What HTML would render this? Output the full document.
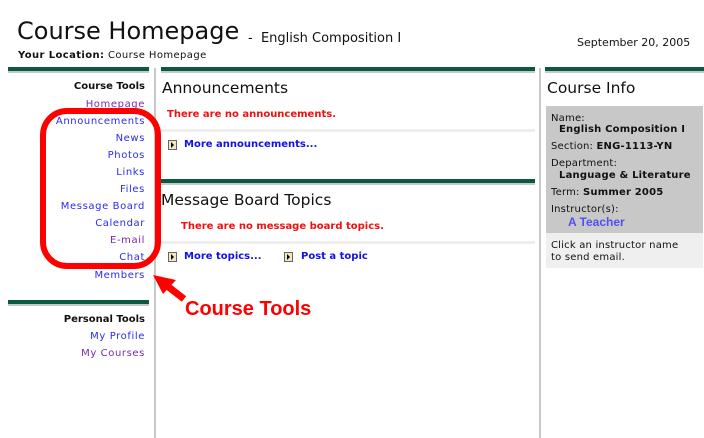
<!DOCTYPE html>
<html><head><style>
body{margin:0;width:704px;height:438px;background:#fff;position:relative;overflow:hidden;font-family:"DejaVu Sans",Verdana,sans-serif;}
.a{position:absolute;white-space:nowrap;}
.bar{position:absolute;height:4px;background:#0b5a3f;border-bottom:2px solid #c8c8c8;}
.vl{position:absolute;width:2px;background:#c8c8c8;top:68px;height:370px;}
.nav{position:absolute;right:559px;font-size:10px;color:#2a2af0;letter-spacing:0.6px;}
.v{color:#7a2aa8;}
.red{color:#f01010;font-weight:bold;font-size:10px;}
.lnk{color:#1010e8;font-weight:bold;font-size:10px;}
.ic{position:absolute;width:7px;height:8px;border:1px solid #666;background:#eee8c0;}
.ic:after{content:"";position:absolute;left:2px;top:1px;border-left:3px solid #000;border-top:3px solid transparent;border-bottom:3px solid transparent;}
.sep{position:absolute;left:161px;width:374px;height:3px;background:#eee;}
.ci{font-size:10px;color:#111;letter-spacing:0.2px;}
</style></head><body>
<div class="a" style="left:17px;top:17px;font-size:24px;color:#111;">Course Homepage</div>
<div class="a" style="left:248px;top:31px;font-size:13px;color:#111;">- &nbsp;English Composition I</div>
<div class="a" style="left:18px;top:50px;font-size:10px;color:#111;letter-spacing:0.4px;"><b>Your Location:</b> Course Homepage</div>
<div class="a" style="left:577px;top:36px;font-size:11px;color:#111;">September 20, 2005</div>

<div class="bar" style="left:8px;width:141px;top:67px;"></div>
<div class="bar" style="left:161px;width:374px;top:67px;"></div>
<div class="bar" style="left:545px;width:159px;top:67px;"></div>
<div class="vl" style="left:154px;"></div>
<div class="vl" style="left:539px;"></div>

<div class="nav" style="top:81px;color:#111;font-weight:bold;letter-spacing:0;">Course Tools</div>
<div class="nav v" style="top:99px;">Homepage</div>
<div class="nav" style="top:116px;">Announcements</div>
<div class="nav" style="top:133px;">News</div>
<div class="nav" style="top:150px;">Photos</div>
<div class="nav" style="top:167px;">Links</div>
<div class="nav" style="top:184px;">Files</div>
<div class="nav" style="top:201px;">Message Board</div>
<div class="nav" style="top:218px;">Calendar</div>
<div class="nav v" style="top:235px;">E-mail</div>
<div class="nav" style="top:252px;">Chat</div>
<div class="nav" style="top:270px;">Members</div>

<div class="bar" style="left:8px;width:141px;top:300px;"></div>
<div class="nav" style="top:314px;color:#111;font-weight:bold;letter-spacing:0;">Personal Tools</div>
<div class="nav" style="top:331px;">My Profile</div>
<div class="nav v" style="top:348px;">My Courses</div>

<div class="a" style="left:162px;top:79px;font-size:15.5px;color:#111;">Announcements</div>
<div class="a red" style="left:167px;top:109px;">There are no announcements.</div>
<div class="sep" style="top:129px;"></div>
<div class="ic" style="left:168px;top:140px;"></div>
<div class="a lnk" style="left:184px;top:139px;">More announcements...</div>

<div class="bar" style="left:161px;width:374px;top:179px;"></div>
<div class="a" style="left:161px;top:191px;font-size:15.5px;color:#111;">Message Board Topics</div>
<div class="a red" style="left:181px;top:221px;">There are no message board topics.</div>
<div class="sep" style="top:241px;"></div>
<div class="ic" style="left:168px;top:252px;"></div>
<div class="a lnk" style="left:184px;top:251px;">More topics...</div>
<div class="ic" style="left:284px;top:252px;"></div>
<div class="a lnk" style="left:301px;top:251px;">Post a topic</div>

<div class="a" style="left:547px;top:79px;font-size:15.5px;color:#111;">Course Info</div>
<div class="a" style="left:546px;top:106px;width:157px;height:127px;background:#c8c8c8;"></div>
<div class="a" style="left:546px;top:233px;width:157px;height:35px;background:#efefef;"></div>
<div class="a ci" style="left:551px;top:113px;">Name:</div>
<div class="a ci" style="left:559px;top:124px;font-weight:bold;">English Composition I</div>
<div class="a ci" style="left:551px;top:141px;">Section: <b>ENG-1113-YN</b></div>
<div class="a ci" style="left:551px;top:158px;">Department:</div>
<div class="a ci" style="left:559px;top:170px;font-weight:bold;">Language &amp; Literature</div>
<div class="a ci" style="left:551px;top:187px;">Term: <b>Summer 2005</b></div>
<div class="a ci" style="left:551px;top:204px;">Instructor(s):</div>
<div class="a" style="left:568px;top:215px;font-family:'Liberation Sans',Arial,sans-serif;font-weight:bold;font-size:12px;color:#5050f0;">A Teacher</div>
<div class="a ci" style="left:551px;top:240px;line-height:12px;">Click an instructor name<br>to send email.</div>

<svg class="a" style="left:0;top:0;" width="704" height="438">
<rect x="43" y="111" width="115" height="155" rx="24" ry="24" fill="none" stroke="#f00" stroke-width="6"/>
<line x1="184" y1="299" x2="166" y2="285" stroke="#f00" stroke-width="7"/>
<polygon points="153,275 176,280 163,294" fill="#f00"/>
</svg>
<div class="a" style="left:185px;top:298px;font-family:'Liberation Sans',Arial,sans-serif;font-weight:bold;font-size:20px;color:#f00;">Course Tools</div>
</body></html>
